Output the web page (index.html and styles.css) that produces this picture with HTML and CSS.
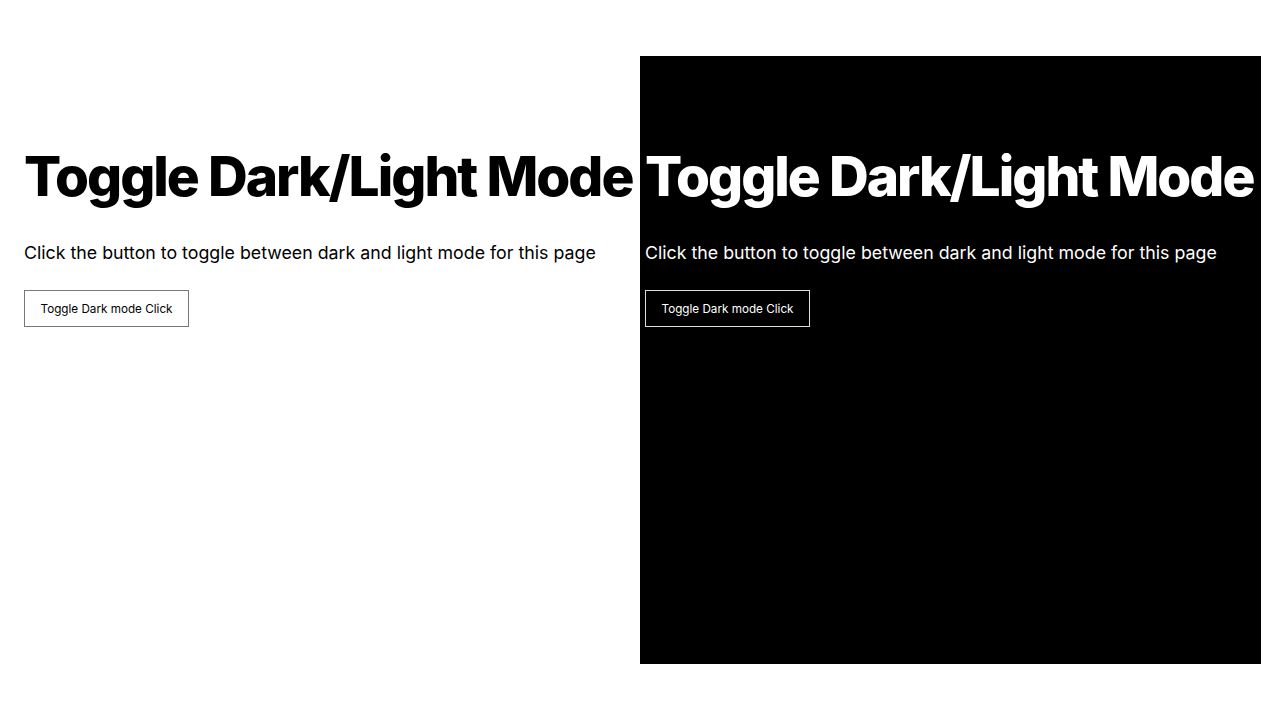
FILE: index.html
```html
<!DOCTYPE html>
<html lang="en">
<head>
<meta charset="utf-8">
<title>Toggle Dark/Light Mode</title>
<link rel="stylesheet" href="styles.css">
</head>
<body>
<div class="page">
  <section class="panel light">
    <h1 class="title">Toggle Dark/Light Mode</h1>
    <p class="lead">Click the button to toggle between dark and light mode for this page</p>
    <button class="toggle">Toggle Dark mode Click</button>
  </section>
  <section class="panel dark">
    <h1 class="title">Toggle Dark/Light Mode</h1>
    <p class="lead">Click the button to toggle between dark and light mode for this page</p>
    <button class="toggle">Toggle Dark mode Click</button>
  </section>
</div>
</body>
</html>
```

FILE: styles.css
```css
html, body {
  margin: 0;
  padding: 0;
  background: #fff;
}
body {
  font-family: "Inter", "Open Sans", sans-serif;
  width: 1280px;
  height: 720px;
  overflow: hidden;
}
.page {
  display: flex;
  align-items: flex-start;
}
.panel {
  box-sizing: border-box;
}
.light {
  width: 640px;
  padding: 138px 0 0 24px;
  color: #000;
}
.dark {
  width: 621px;
  height: 608px;
  margin-top: 56px;
  padding: 82px 0 0 5px;
  background: #000;
  color: #fff;
}
.title {
  margin: 0;
  font-size: 55px;
  font-weight: 800;
  line-height: 76px;
  letter-spacing: -2px;
  white-space: nowrap;
}
.lead {
  margin: 26px 0 0;
  font-size: 17.8px;
  line-height: 26px;
}
.toggle {
  margin-top: 24px;
  box-sizing: border-box;
  width: 165px;
  height: 37px;
  padding: 0;
  font-family: inherit;
  font-size: 11.7px;
  background: transparent;
  border: 1px solid #777;
  color: #000;
}
.dark .toggle {
  color: #fff;
  border-color: #ddd;
}
```
